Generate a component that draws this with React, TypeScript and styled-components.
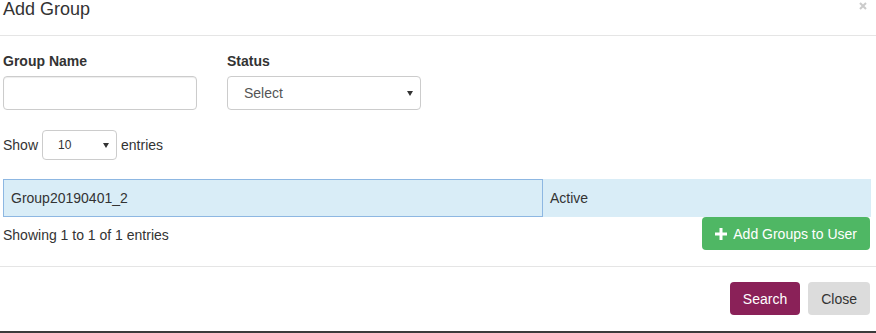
import React from "react";
import styled, { createGlobalStyle } from "styled-components";

const Global = createGlobalStyle`
  html, body { margin: 0; padding: 0; background: #fff; }
  body { font-family: "Liberation Sans", Arial, sans-serif; font-size: 14px; line-height: 20px; color: #333; }
  * { box-sizing: border-box; }
`;

const Modal = styled.div`
  width: 876px;
  height: 333px;
  display: flex;
  flex-direction: column;
  background: #fff;
`;

const Header = styled.div`
  height: 37px;
  border-bottom: 1px solid #e5e5e5;
  display: flex;
  justify-content: space-between;
  align-items: flex-start;
  padding: 0 9px 0 3px;
`;

const Title = styled.h4`
  margin: 0;
  font-size: 18px;
  font-weight: normal;
  line-height: 19px;
  color: #333;
`;

const CloseButton = styled.button`
  border: none;
  background: none;
  padding: 0;
  margin-top: 2px;
  display: flex;
  opacity: 0.2;
`;

const CloseIcon = () => (
  <svg width="8" height="8" viewBox="0 0 8 8">
    <path d="M1 1 L7 7 M7 1 L1 7" stroke="#000" strokeWidth="2" />
  </svg>
);

const Body = styled.div`
  padding: 15px 5px 16px 3px;
  display: flex;
  flex-direction: column;
  border-bottom: 1px solid #e5e5e5;
`;

const FormRow = styled.div`
  display: flex;
  gap: 30px;
`;

const FormGroup = styled.div`
  width: 194px;
  display: flex;
  flex-direction: column;
`;

const Label = styled.label`
  font-weight: bold;
  margin-bottom: 5px;
`;

const TextInput = styled.input`
  height: 34px;
  width: 100%;
  border: 1px solid #ccc;
  border-radius: 4px;
  box-shadow: inset 0 1px 1px rgba(0,0,0,0.075);
  font: inherit;
  padding: 6px 12px;
`;

const FakeSelect = styled.div<{ $h: number; $fs: number; $pl: number }>`
  height: ${(p) => p.$h}px;
  border: 1px solid #ccc;
  border-radius: 4px;
  display: flex;
  align-items: center;
  justify-content: space-between;
  padding: 0 7px 0 ${(p) => p.$pl}px;
  font-size: ${(p) => p.$fs}px;
  color: #555;
  background: #fff;
`;

const Arrow = () => (
  <svg width="6" height="5" viewBox="0 0 6 5">
    <polygon points="0,0 6,0 3,5" fill="#333" />
  </svg>
);

const ShowRow = styled.div`
  margin-top: 20px;
  display: flex;
  align-items: center;
  gap: 4px;
`;

const SmallSelect = styled(FakeSelect)`
  width: 75px;
  flex: none;
  color: #333;
`;

const Table = styled.table`
  margin-top: 19px;
  width: 868px;
  border-collapse: collapse;
`;

const Cell = styled.td<{ $focus?: boolean }>`
  height: 37px;
  background: #d9edf7;
  padding: 0 7px;
  border: 1px solid ${(p) => (p.$focus ? "#8db7e2" : "#d9edf7")};
  vertical-align: middle;
`;

const BottomRow = styled.div`
  display: flex;
  justify-content: space-between;
  align-items: flex-start;
  padding-right: 1px;
`;

const Info = styled.div`
  padding-top: 8px;
`;

const Btn = styled.button<{ $bg: string; $fg: string }>`
  height: 33px;
  border: none;
  border-radius: 4px;
  padding: 0 13px;
  font-family: inherit;
  font-size: 14px;
  background: ${(p) => p.$bg};
  color: ${(p) => p.$fg};
  display: inline-flex;
  align-items: center;
  gap: 6px;
`;

const Footer = styled.div`
  padding: 15px 6px 16px 0;
  display: flex;
  justify-content: flex-end;
  gap: 8px;
`;

const BottomBar = styled.div`
  height: 2px;
  background: #3b3b3b;
`;

const Plus = () => (
  <svg width="12" height="12" viewBox="0 0 12 12">
    <rect x="4.5" y="0" width="3" height="12" fill="#fff" />
    <rect x="0" y="4.5" width="12" height="3" fill="#fff" />
  </svg>
);

export default function App() {
  return (
    <>
      <Global />
      <Modal>
        <Header>
          <Title>Add Group</Title>
          <CloseButton aria-label="Close">
            <CloseIcon />
          </CloseButton>
        </Header>
        <Body>
          <FormRow>
            <FormGroup>
              <Label>Group Name</Label>
              <TextInput type="text" />
            </FormGroup>
            <FormGroup>
              <Label>Status</Label>
              <FakeSelect $h={34} $fs={14} $pl={16}>
                <span>Select</span>
                <Arrow />
              </FakeSelect>
            </FormGroup>
          </FormRow>
          <ShowRow>
            <span>Show</span>
            <SmallSelect $h={30} $fs={12} $pl={15}>
              <span>10</span>
              <Arrow />
            </SmallSelect>
            <span>entries</span>
          </ShowRow>
          <Table>
            <tbody>
              <tr>
                <Cell $focus style={{ width: 539 }}>Group20190401_2</Cell>
                <Cell>Active</Cell>
              </tr>
            </tbody>
          </Table>
          <BottomRow>
            <Info>Showing 1 to 1 of 1 entries</Info>
            <Btn $bg="#4fb764" $fg="#fff">
              <Plus />
              Add Groups to User
            </Btn>
          </BottomRow>
        </Body>
        <Footer>
          <Btn $bg="#8a2158" $fg="#fff">Search</Btn>
          <Btn $bg="#dcdcdc" $fg="#333">Close</Btn>
        </Footer>
        <BottomBar />
      </Modal>
    </>
  );
}
